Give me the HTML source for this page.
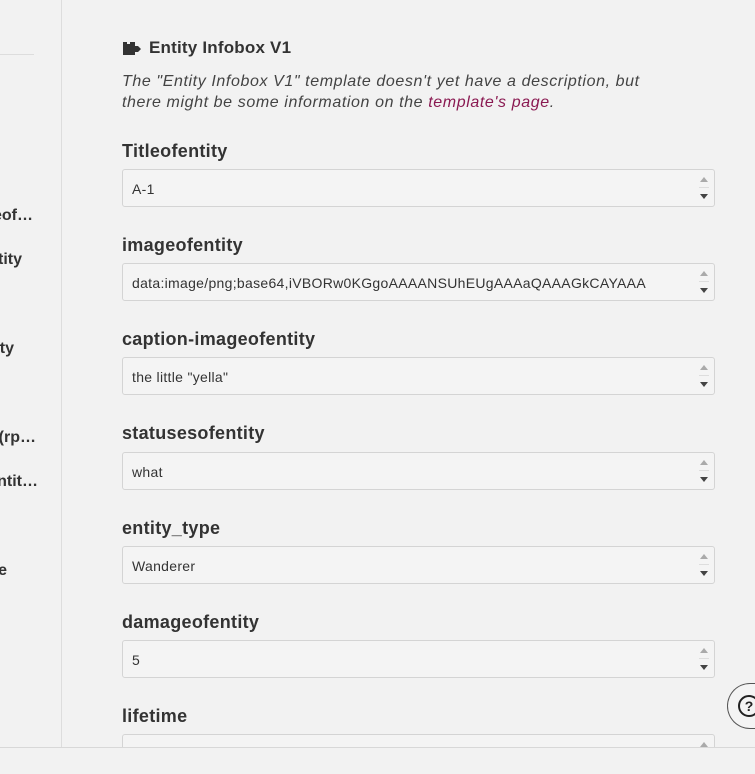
<!DOCTYPE html>
<html><head><meta charset="utf-8"><style>
*{box-sizing:border-box;margin:0;padding:0}
html,body{width:755px;height:774px;overflow:hidden}
body{background:#f2f2f2;font-family:"Liberation Sans","DejaVu Sans",sans-serif;color:#333;position:relative}
.side{position:absolute;left:0;top:0;width:62px;height:747px;border-right:1px solid #ddd;overflow:hidden}
.hr{position:absolute;left:0;top:54px;width:34px;border-top:1px solid #ddd}
.s{position:absolute;font-weight:bold;font-size:16px;color:#333;white-space:nowrap;text-align:right}
h1{position:absolute;left:122px;top:38px;font-size:17px;font-weight:bold;color:#333;display:flex;align-items:center;letter-spacing:0.2px}
.desc{position:absolute;left:122px;top:71px;font-size:16px;font-style:italic;line-height:21px;color:#444;width:600px;letter-spacing:0.6px;white-space:nowrap}
.desc a{color:#8a1a52;text-decoration:none}
.lab{position:absolute;left:122px;font-size:18px;font-weight:bold;color:#333;letter-spacing:0.3px}
.inp{position:absolute;left:122px;width:593px;height:38px;border:1px solid #d4d4d4;border-radius:3px;background:#f4f4f4;font-size:14px;color:#333;padding:11px 0 0 9px;white-space:nowrap;overflow:hidden;letter-spacing:0.3px}
.sp{position:absolute;right:5px;top:5px;width:10px;height:26px}
.sp:before{content:"";position:absolute;left:1px;top:2px;border:4px solid transparent;border-bottom:5px solid #aaa;border-top:0}
.sp:after{content:"";position:absolute;left:1px;top:19px;border:4px solid transparent;border-top:5px solid #444;border-bottom:0}
.sp i{position:absolute;left:0;top:12px;width:10px;border-top:1px solid #ddd}
.foot{position:absolute;left:0;top:747px;width:755px;height:27px;border-top:1px solid #d8d8d8;background:#f2f2f2}
.help{position:absolute;left:727px;top:683px;width:28px;height:46px;border:1px solid #555;border-right:0;border-radius:23px 0 0 23px;background:#f4f4f4;overflow:hidden}
.help span{position:absolute;left:10px;top:11px;width:22px;height:22px;border:2px solid #222;border-radius:50%;font-size:14px;font-weight:bold;text-align:center;line-height:18px;color:#222}
</style></head><body>
<div class="side"><div class="hr"></div>
<div class="s" style="right:28px;top:207px">Titleof…</div>
<div class="s" style="right:39px;top:251px">entity</div>
<div class="s" style="right:47px;top:340px">entity</div>
<div class="s" style="right:25px;top:429px">type(rp…</div>
<div class="s" style="right:23px;top:473px">ofentit…</div>
<div class="s" style="right:54px;top:562px">lifetime</div>
</div>
<h1><svg width="22" height="16" viewBox="0 0 22 16" style="margin-right:5px"><path d="M1 2h4v2h3V2h5v4h3l3 3-3 3h-3v3H1z" fill="#333"/></svg>Entity Infobox V1</h1>
<div class="desc">The "Entity Infobox V1" template doesn't yet have a description, but<br>there might be some information on the <a>template's page</a>.</div>

<div class="lab" style="top:141px">Titleofentity</div>
<div class="inp" style="top:169px">A-1<div class="sp"><i></i></div></div>
<div class="lab" style="top:235px">imageofentity</div>
<div class="inp" style="top:263px">data:image/png;base64,iVBORw0KGgoAAAANSUhEUgAAAaQAAAGkCAYAAA<div class="sp"><i></i></div></div>
<div class="lab" style="top:329px">caption-imageofentity</div>
<div class="inp" style="top:357px">the little "yella"<div class="sp"><i></i></div></div>
<div class="lab" style="top:423px">statusesofentity</div>
<div class="inp" style="top:452px">what<div class="sp"><i></i></div></div>
<div class="lab" style="top:518px">entity_type</div>
<div class="inp" style="top:546px">Wanderer<div class="sp"><i></i></div></div>
<div class="lab" style="top:612px">damageofentity</div>
<div class="inp" style="top:640px">5<div class="sp"><i></i></div></div>
<div class="lab" style="top:706px">lifetime</div>
<div class="inp" style="top:734px"><div class="sp"><i></i></div></div>
<div class="help"><span>?</span></div>
<div class="foot"></div>
</body></html>
